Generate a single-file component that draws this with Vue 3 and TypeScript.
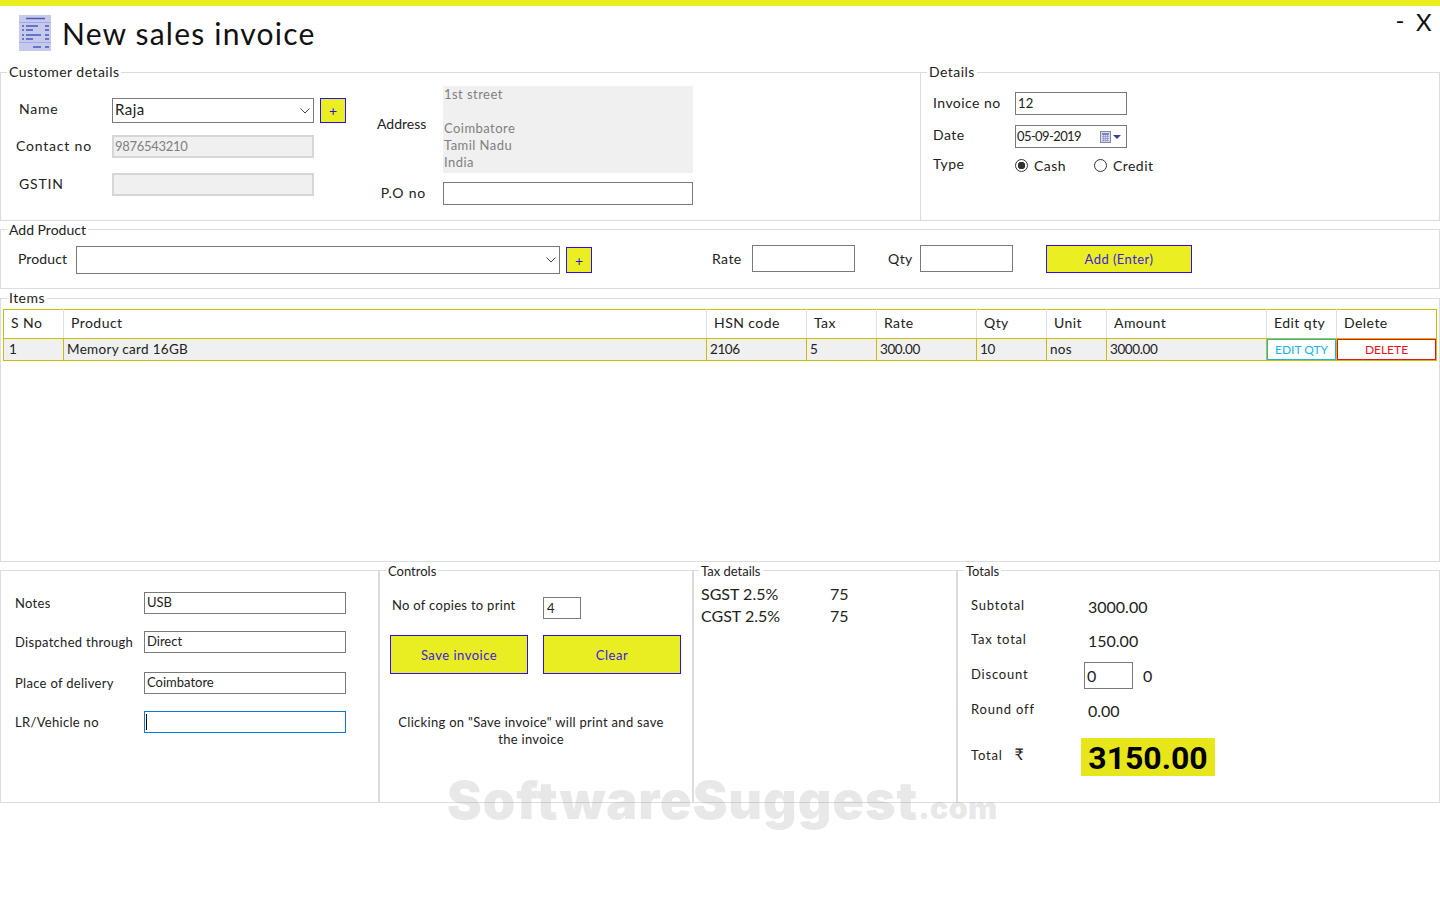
<script setup lang="ts">
interface Column {
  label: string
  width: number
}

const columns: Column[] = [
  { label: 'S No', width: 60 },
  { label: 'Product', width: 643 },
  { label: 'HSN code', width: 100 },
  { label: 'Tax', width: 70 },
  { label: 'Rate', width: 100 },
  { label: 'Qty', width: 70 },
  { label: 'Unit', width: 60 },
  { label: 'Amount', width: 160 },
  { label: 'Edit qty', width: 70 },
  { label: 'Delete', width: 100 },
]

const row = ['1', 'Memory card 16GB', '2106', '5', '300.00', '10', 'nos', '3000.00']

const isNumber = (v: string) => /^[\d.]+$/.test(v)

const notes = [
  { label: 'Notes', value: 'USB' },
  { label: 'Dispatched through', value: 'Direct' },
  { label: 'Place of delivery', value: 'Coimbatore' },
]

const taxes = [
  { label: 'SGST 2.5%', value: '75' },
  { label: 'CGST 2.5%', value: '75' },
]
</script>

<template>
  <div class="app">
    <div class="topbar"></div>

    <header class="header">
      <svg class="doc-icon" width="32" height="36" viewBox="0 0 32 36">
        <rect width="32" height="36" fill="#c5c9ec" />
        <path d="M0 7.500h32M0 27.500h32" stroke="#a4aade" stroke-width="1" fill="none" />
        <path d="M7 3.500h19" stroke="#4a57b8" stroke-width="1.500" fill="none" />
        <path d="M3 11h2M3 15h2M3 20h2M3 24h2M26 11h4M26 15h4M26 20h4M26 24h4" stroke="#4a57b8" stroke-width="1.600" fill="none" />
        <path d="M7 11h12M7 15h7M7 20h15M7 24h7M14 32h8M26 32h4" stroke="#4a57b8" stroke-width="1.600" fill="none" />
      </svg>
      <h1 class="title">New sales invoice</h1>
      <div class="win-controls">
        <span class="win-min">-</span>
        <span class="win-close">X</span>
      </div>
    </header>

    <div class="top-groups">
      <section class="group customer">
        <span class="legend">Customer details</span>
        <div class="cust-left">
          <div class="field name-row">
            <label class="name-label">Name</label>
            <div class="select name-select">
              <span>Raja</span>
              <svg width="10" height="6" viewBox="0 0 10 6"><path d="M.5.5 5 5 9.500.5" fill="none" stroke="#444" /></svg>
            </div>
            <button class="plus">+</button>
          </div>
          <div class="field contact-row">
            <label>Contact no</label>
            <div class="input disabled">9876543210</div>
          </div>
          <div class="field gst-row">
            <label class="name-label">GSTIN</label>
            <div class="input disabled"></div>
          </div>
        </div>
        <div class="cust-right">
          <div class="address-row">
            <label>Address</label>
            <div class="address">
              <div>1st street</div>
              <div>&nbsp;</div>
              <div>Coimbatore</div>
              <div>Tamil Nadu</div>
              <div>India</div>
            </div>
          </div>
          <div class="po-row">
            <label>P.O no</label>
            <div class="input po"></div>
          </div>
        </div>
      </section>

      <section class="group details">
        <span class="legend">Details</span>
        <div class="det-row">
          <label>Invoice no</label>
          <div class="input det-input">12</div>
        </div>
        <div class="det-row date-row">
          <label>Date</label>
          <div class="input det-input date">
            <span>05-09-2019</span>
            <svg width="21" height="14" viewBox="0 0 21 14">
              <rect x=".500" y="1.500" width="10" height="11" fill="#d9dcef" stroke="#8a8a96" />
              <path d="M2 4h7" stroke="#5a68b0" stroke-width="1.500" />
              <path d="M2 6.500h7M2 8.500h7M2 10.500h7M3.500 5v6.500M5.500 5v6.500M7.500 5v6.500" stroke="#8a92cc" stroke-width=".7" />
              <path d="M13 5h8l-4 4z" fill="#3c3f8c" />
            </svg>
          </div>
        </div>
        <div class="det-row type-row">
          <label>Type</label>
          <div class="radios">
            <span class="radio on"></span><span class="radio-text cash">Cash</span>
            <span class="radio"></span><span class="radio-text">Credit</span>
          </div>
        </div>
      </section>
    </div>

    <section class="group add-product">
      <span class="legend">Add Product</span>
      <label class="product-label">Product</label>
      <div class="select product-select">
        <svg width="10" height="6" viewBox="0 0 10 6"><path d="M.5.5 5 5 9.500.5" fill="none" stroke="#444" /></svg>
      </div>
      <button class="plus product-plus">+</button>
      <label class="rate-label">Rate</label>
      <div class="input rate-input"></div>
      <label class="qty-label">Qty</label>
      <div class="input qty-input"></div>
      <button class="add-btn">Add (Enter)</button>
    </section>

    <section class="group items">
      <span class="legend">Items</span>
      <table class="table">
        <colgroup>
          <col v-for="c in columns" :key="c.label" :style="{ width: c.width + 'px' }" />
        </colgroup>
        <thead>
          <tr>
            <th v-for="c in columns" :key="c.label">{{ c.label }}</th>
          </tr>
        </thead>
        <tbody>
          <tr>
            <td v-for="(v, i) in row" :key="i" :class="{ num: isNumber(v) }">{{ v }}</td>
            <td class="btn-cell"><span class="edit-btn">EDIT QTY</span></td>
            <td class="btn-cell"><span class="del-btn">DELETE</span></td>
          </tr>
        </tbody>
      </table>
    </section>

    <div class="bottom-groups">
      <section class="group notes">
        <div v-for="n in notes" :key="n.label" class="note-row">
          <label>{{ n.label }}</label>
          <div class="input note-input">{{ n.value }}</div>
        </div>
        <div class="note-row">
          <label>LR/Vehicle no</label>
          <div class="input note-input focused"><span class="caret"></span></div>
        </div>
      </section>

      <section class="group controls">
        <span class="legend">Controls</span>
        <div class="copies">
          <label>No of copies to print</label>
          <div class="input copies-input">4</div>
        </div>
        <div class="ctl-buttons">
          <button class="ctl-btn">Save invoice</button>
          <button class="ctl-btn">Clear</button>
        </div>
        <p class="hint">Clicking on "Save invoice" will print and save the invoice</p>
      </section>

      <section class="group tax">
        <span class="legend">Tax details</span>
        <div v-for="t in taxes" :key="t.label" class="tax-row">
          <span class="tax-name">{{ t.label }}</span>
          <span>{{ t.value }}</span>
        </div>
      </section>

      <section class="group totals">
        <span class="legend">Totals</span>
        <div class="tot-row subtotal">
          <label>Subtotal</label>
          <span class="tot-val">3000.00</span>
        </div>
        <div class="tot-row taxtotal">
          <label>Tax total</label>
          <span class="tot-val">150.00</span>
        </div>
        <div class="tot-row discount">
          <label>Discount</label>
          <div class="input disc-input">0</div>
          <span class="disc-val">0</span>
        </div>
        <div class="tot-row roundoff">
          <label>Round off</label>
          <span class="tot-val">0.00</span>
        </div>
        <div class="tot-row grand">
          <label>Total<span class="rupee">₹</span></label>
          <span class="grand-val">3150.00</span>
        </div>
      </section>
    </div>

    <div class="watermark">SoftwareSuggest<span class="wm-com">.com</span></div>
  </div>
</template>

<style scoped>
.app {
  position: relative;
  width: 1440px;
  height: 900px;
  overflow: hidden;
  background: #fff;
  color: #222;
  font-family: Lato, "Open Sans", sans-serif;
  font-size: 14px;
  letter-spacing: 0.45px;
}

label {
  white-space: nowrap;
}

.topbar {
  height: 6px;
  background: #ebef22;
}

.header {
  height: 66px;
  display: flex;
  align-items: flex-start;
  box-sizing: border-box;
  padding: 9px 8px 0 19px;
}

.doc-icon {
  flex: none;
}

.title {
  margin: 0 0 0 11px;
  font-size: 30px;
  font-weight: 400;
  line-height: 36px;
  color: #111;
  letter-spacing: 1.2px;
}

.win-controls {
  margin: -2px 0 0 auto;
  display: flex;
  gap: 11px;
  font-size: 24px;
  line-height: 18px;
  color: #111;
}

.win-min {
  line-height: 14px;
}

.group {
  position: relative;
  box-sizing: border-box;
  border: 1px solid #dcdcdc;
}

.legend {
  position: absolute;
  left: 6px;
  top: -9px;
  padding: 0 2px;
  background: #fff;
  line-height: 16px;
  white-space: nowrap;
}

.top-groups {
  display: flex;
  height: 149px;
}

.customer {
  width: 920px;
  display: flex;
  border-right: 0;
}

.cust-left {
  width: 376px;
  box-sizing: border-box;
  padding: 25px 0 0 15px;
}

.field {
  display: flex;
  align-items: center;
}

.field label {
  width: 96px;
  margin-bottom: 2px;
  letter-spacing: 0.8px;
}

.field .name-label {
  padding-left: 3px;
  box-sizing: border-box;
}

.name-row .name-label {
  margin-bottom: 4px;
}

.input {
  box-sizing: border-box;
  border: 1px solid #7a7a7a;
  background: #fff;
  padding-left: 2px;
  white-space: nowrap;
  letter-spacing: 0.3px;
}

.disabled {
  width: 202px;
  height: 23px;
  line-height: 19px;
  background: #f0f0f0;
  border: 2px solid #d6d6d6;
  color: #808080;
  padding-left: 1px;
  font-size: 13px;
  letter-spacing: -0.3px;
}

.select {
  box-sizing: border-box;
  display: flex;
  align-items: center;
  justify-content: flex-end;
  border: 1px solid #7a7a7a;
  padding: 0 3px 0 2px;
}

.select span {
  margin: 0 auto 3px 0;
}

.name-select {
  width: 202px;
  height: 25px;
  font-size: 15px;
}

.plus {
  box-sizing: border-box;
  width: 26px;
  height: 25px;
  margin-left: 6px;
  padding: 0;
  border: 1px solid #2a10f0;
  background: #ebef22;
  color: #2a10f0;
  font-family: inherit;
  font-size: 14px;
}

.contact-row {
  margin-top: 12px;
}

.gst-row {
  margin-top: 15px;
}

.cust-right {
  padding-top: 13px;
}

.address-row {
  display: flex;
  align-items: center;
}

.address-row label,
.po-row label {
  width: 49px;
  margin-right: 17px;
  text-align: right;
}

.address-row label {
  margin-bottom: 12px;
  letter-spacing: 0;
}

.po-row label {
  margin-bottom: 2px;
  letter-spacing: 0.8px;
}

.address {
  box-sizing: border-box;
  width: 250px;
  height: 87px;
  background: #f0f0f0;
  color: #808080;
  padding: 0 1px;
  font-size: 13px;
  line-height: 17px;
}

.po-row {
  display: flex;
  align-items: center;
  margin-top: 9px;
}

.po {
  width: 250px;
  height: 23px;
}

.details {
  flex: 1;
  padding: 19px 0 0 12px;
}

.det-row {
  display: flex;
  align-items: center;
  height: 23px;
  margin-bottom: 10px;
}

.det-row label {
  width: 82px;
  margin-bottom: 2px;
}

.date-row label {
  margin-bottom: 4px;
}

.det-input {
  width: 112px;
  height: 23px;
  line-height: 21px;
  font-size: 13px;
}

.date {
  display: flex;
  align-items: center;
  justify-content: space-between;
  padding-right: 5px;
  padding-left: 1px;
  letter-spacing: -0.6px;
}

.type-row {
  margin-top: -2px;
}

.type-row label {
  margin-bottom: 8px;
}

.radios {
  display: flex;
  align-items: center;
  margin-bottom: 4px;
}

.radio {
  box-sizing: border-box;
  width: 13px;
  height: 13px;
  border: 1px solid #333;
  border-radius: 50%;
  margin-right: 6px;
}

.radio.on {
  background: radial-gradient(circle, #333 0 3.500px, #fff 4px);
}

.cash {
  margin-right: 28px;
}

.add-product {
  margin-top: 8px;
  height: 60px;
  display: flex;
  align-items: center;
  padding-top: 2px;
}

.add-product .legend {
  top: -8px;
  letter-spacing: 0;
}

.add-product label {
  margin-bottom: 4px;
}

.product-label {
  margin-left: 17px;
  width: 58px;
  letter-spacing: 0.1px;
}

.product-select {
  width: 484px;
  height: 28px;
  font-size: 14px;
}

.product-plus {
  height: 26px;
}

.rate-label {
  margin-left: 120px;
  width: 40px;
}

.rate-input {
  width: 103px;
  height: 27px;
  margin-top: -3px;
}

.qty-label {
  margin-left: 33px;
  width: 32px;
}

.qty-input {
  width: 93px;
  height: 27px;
  margin-top: -3px;
}

.add-btn {
  box-sizing: border-box;
  width: 146px;
  height: 28px;
  margin: 0 0 2px 33px;
  border: 1px solid #2a10f0;
  background: #ebef22;
  color: #3a20e0;
  font-family: inherit;
  font-size: 13px;
  letter-spacing: 0.45px;
}

.items {
  margin-top: 9px;
  height: 264px;
  padding: 10px 1px 0 2px;
}

.table {
  width: 1433px;
  table-layout: fixed;
  border-collapse: collapse;
  font-size: 14px;
}

.table th {
  height: 29px;
  padding: 0 0 4px 7px;
  text-align: left;
  font-weight: 400;
  border: 1px solid #e0e0e0;
  border-top: 1px solid #c8c000;
  border-bottom: 1px solid #c8c000;
  white-space: nowrap;
  box-sizing: border-box;
}

.table th:first-child {
  border-left: 1px solid #c8c000;
}

.table th:last-child {
  border-right: 1px solid #c8c000;
}

.table td {
  height: 22px;
  padding: 0 0 2px 3px;
  background: #f0f0f0;
  border: 1px solid #c8c000;
  white-space: nowrap;
  letter-spacing: 0.3px;
  font-size: 13.500px;
  box-sizing: border-box;
}

.table td:first-child {
  padding-left: 5px;
}

.table td.num {
  letter-spacing: -0.4px;
}

.table td.btn-cell {
  padding: 0;
  background: #fff;
  font-size: 12px;
  text-align: center;
  letter-spacing: 0;
}

.edit-btn,
.del-btn {
  display: block;
  box-sizing: border-box;
  height: 21px;
  line-height: 19px;
}

.edit-btn {
  border: 1px solid #18b4e6;
  color: #18b4e6;
}

.del-btn {
  border: 1px solid #e8101c;
  color: #e8101c;
}

.bottom-groups {
  display: flex;
  margin-top: 8px;
  height: 233px;
  font-size: 13px;
  letter-spacing: 0.3px;
}

.bottom-groups .group {
  border-right: 0;
}

.bottom-groups .legend {
  top: -8px;
  font-size: 13px;
  letter-spacing: 0;
}

.notes {
  width: 378px;
  padding: 21px 0 0 14px;
}

.note-row {
  display: flex;
  align-items: center;
  height: 22px;
  margin-bottom: 17px;
}

.note-row:nth-child(2) {
  margin-bottom: 19px;
}

.note-row label {
  width: 129px;
}

.note-input {
  width: 202px;
  height: 22px;
  line-height: 18px;
  letter-spacing: 0;
}

.focused {
  border-color: #0a78d7;
  display: flex;
  align-items: center;
  padding-left: 1px;
}

.caret {
  width: 1px;
  height: 16px;
  background: #000;
}

.controls {
  width: 314px;
  border-left-width: 2px;
  padding: 26px 0 0 12px;
}

.copies {
  display: flex;
  align-items: center;
  height: 22px;
}

.copies label {
  width: 151px;
  margin-bottom: 6px;
}

.copies-input {
  width: 38px;
  height: 22px;
  line-height: 20px;
  padding-left: 3px;
}

.ctl-buttons {
  display: flex;
  gap: 15px;
  margin: 16px 0 0 -2px;
}

.ctl-btn {
  box-sizing: border-box;
  width: 138px;
  height: 39px;
  border: 1px solid #2a10f0;
  background: #e9ee22;
  color: #3a20e0;
  font-family: inherit;
  font-size: 13px;
  letter-spacing: 0.5px;
}

.hint {
  width: 270px;
  margin: 40px 0 0 4px;
  text-align: center;
  line-height: 17px;
}

.tax {
  width: 264px;
  border-left-width: 2px;
  padding: 12px 0 0 7px;
  font-size: 16px;
  line-height: 22px;
  letter-spacing: 0;
}

.bottom-groups .tax .legend {
  left: 5px;
}

.tax-row {
  display: flex;
}

.tax-name {
  width: 129px;
}

.bottom-groups .totals {
  flex: 1;
  border-left-width: 2px;
  border-right: 1px solid #dcdcdc;
  padding: 0 0 0 13px;
}

.tot-row {
  display: flex;
  align-items: center;
  letter-spacing: 0;
}

.tot-row label {
  width: 117px;
  margin-bottom: 4px;
  letter-spacing: 0.8px;
}

.tot-val {
  font-size: 16px;
  margin-bottom: 2px;
}

.subtotal {
  margin-top: 26px;
  height: 20px;
}

.taxtotal {
  margin-top: 14px;
  height: 20px;
}

.discount {
  margin-top: 11px;
  height: 27px;
}

.tot-row.discount label {
  width: 113px;
}

.disc-input {
  width: 49px;
  height: 27px;
  font-size: 16px;
  line-height: 25px;
}

.disc-val {
  margin-left: 10px;
  font-size: 16px;
}

.roundoff {
  margin-top: 12px;
  height: 20px;
}

.grand {
  margin-top: 17px;
  height: 38px;
}

.tot-row.grand label {
  width: 110px;
  margin-bottom: 8px;
}

.rupee {
  margin-left: 12px;
  font-size: 16px;
}

.grand-val {
  box-sizing: border-box;
  width: 134px;
  height: 38px;
  line-height: 41px;
  text-align: center;
  background: #e6e61a;
  color: #000;
  font-family: Roboto, sans-serif;
  font-size: 32px;
  font-weight: 700;
}

.watermark {
  position: absolute;
  left: 447px;
  top: 769px;
  font-family: Inter, "Open Sans", sans-serif;
  font-weight: 900;
  font-size: 52px;
  line-height: 64px;
  letter-spacing: 1px;
  color: rgba(150, 150, 150, 0.22);
  white-space: nowrap;
  pointer-events: none;
}

.wm-com {
  font-size: 31px;
  letter-spacing: 0;
}
</style>
